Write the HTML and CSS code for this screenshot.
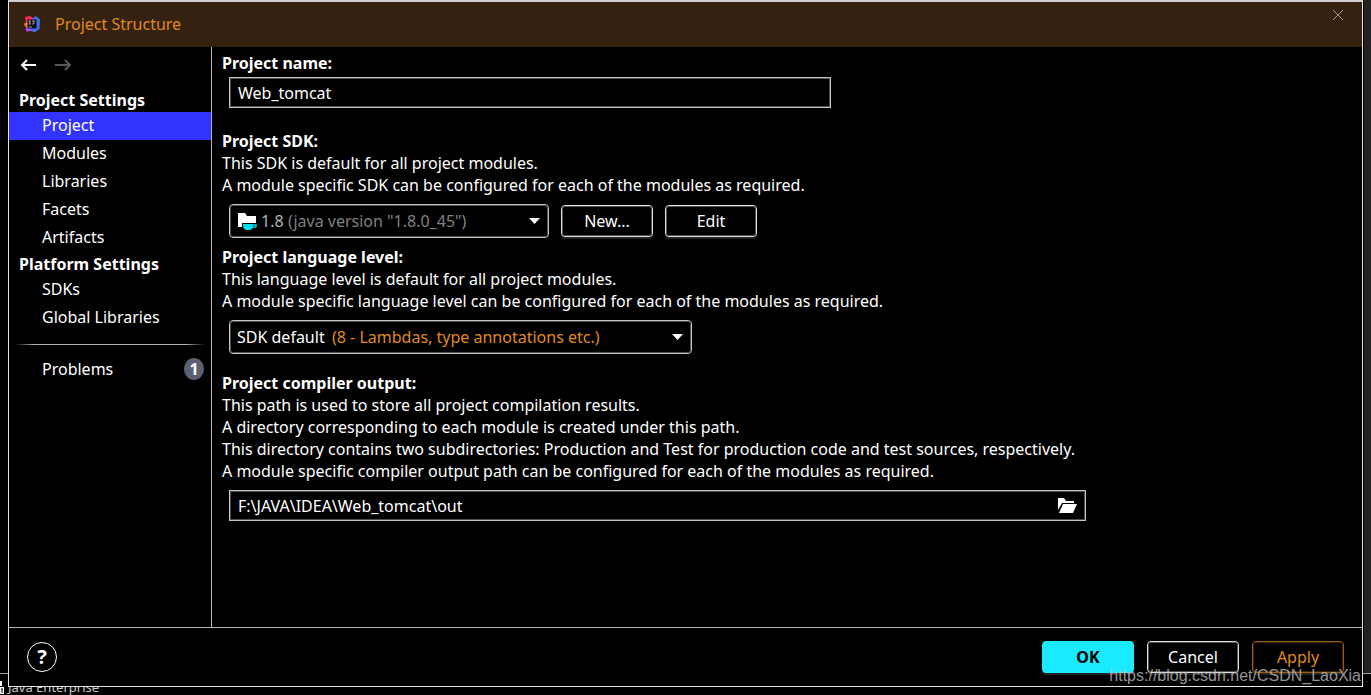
FILE: index.html
```
<!DOCTYPE html>
<html lang="en">
<head>
    <meta charset="UTF-8">
    <title>Project Structure</title>
    <link rel="stylesheet" href="styles.css">
</head>
<body>
    <div class="backdrop">
        <svg class="backdrop-icon" viewBox="0 0 4 13">
            <path d="M0 0H2V5H0ZM0 6H4V13H0Z" fill="#fff"/>
            <path d="M1 8H3M2 8V12" fill="none" stroke="#000"/>
        </svg>
        <span class="backdrop-text">Java Enterprise</span>
    </div>
    <div class="dialog">
        <header class="title-bar">
            <svg class="logo" viewBox="0 0 16 16">
                <path d="M1 1L6 0L10 2.500L8 9L2 9L0 8L2 6Z" fill="#fe2857"/>
                <path d="M0 8L4 6L6 11L2 11.500Z" fill="#fc801d"/>
                <path d="M2 10.500L8 8L11 16L7 15L2 15.500Z" fill="#b74af7"/>
                <path d="M9 2L12 0L16 3.500L15.500 13L11 16L6 14L9 8Z" fill="#3f6fee"/>
                <path d="M3.500 3.500H12.500V12.500H3.500Z" fill="#0a0a0a"/>
                <path d="M4.500 5H7M5.800 5V8M4.500 8H7M8 5H10.500M10 5V7.500L9 8H8M4.500 11H8" fill="none" stroke="#ccc" stroke-width="0.800"/>
            </svg>
            <h1>Project Structure</h1>
            <button class="close" aria-label="Close">
                <svg viewBox="0 0 10 10"><path d="M0 0L10 10M10 0L0 10" fill="none" stroke="#a09a94"/></svg>
            </button>
        </header>
        <div class="content">
            <nav class="sidebar">
                <div class="history">
                    <button aria-label="Back">
                        <svg viewBox="0 0 18 14"><path d="M17 7H3M8 2L3 7L8 12" fill="none" stroke="#fff" stroke-width="2"/></svg>
                    </button>
                    <button aria-label="Forward">
                        <svg viewBox="0 0 18 14"><path d="M1 7H16M11 2L16 7L11 12" fill="none" stroke="#5a5a5a" stroke-width="2"/></svg>
                    </button>
                </div>
                <h2>Project Settings</h2>
                <ul>
                    <li><a href="#" class="active">Project</a></li>
                    <li><a href="#">Modules</a></li>
                    <li><a href="#">Libraries</a></li>
                    <li><a href="#">Facets</a></li>
                    <li><a href="#">Artifacts</a></li>
                </ul>
                <h2>Platform Settings</h2>
                <ul>
                    <li><a href="#">SDKs</a></li>
                    <li><a href="#">Global Libraries</a></li>
                </ul>
                <div class="separator"></div>
                <ul>
                    <li><a href="#">Problems <span class="count">1</span></a></li>
                </ul>
            </nav>
            <main class="settings">
                <section>
                    <label class="heading" for="name">Project name:</label>
                    <input class="field name-field" id="name" type="text" value="Web_tomcat">
                </section>
                <section>
                    <label class="heading" for="sdk">Project SDK:</label>
                    <p>This SDK is default for all project modules.</p>
                    <p>A module specific SDK can be configured for each of the modules as required.</p>
                    <div class="controls">
                        <div class="combo sdk-combo">
                            <select id="sdk">
                                <option>1.8</option>
                            </select>
                            <svg class="sdk-icon" viewBox="0 0 20 18">
                                <path d="M0 1H7L9 4H18V11H4V15H0Z" fill="#fff"/>
                                <path d="M5 12H15V13Q15 18 11 18H9Q5 18 5 13Z" fill="#00e0f5"/>
                                <path d="M14.500 13H18V14.500Q17.500 15.500 14.500 15.500" fill="none" stroke="#00e0f5" stroke-width="1.500"/>
                            </svg>
                            <span class="hint">(java version "1.8.0_45")</span>
                            <svg class="arrow" viewBox="0 0 11 6"><path d="M0 0H11L5.500 6Z" fill="#fff"/></svg>
                        </div>
                        <button class="btn">New...</button>
                        <button class="btn">Edit</button>
                    </div>
                </section>
                <section>
                    <label class="heading" for="level">Project language level:</label>
                    <p>This language level is default for all project modules.</p>
                    <p>A module specific language level can be configured for each of the modules as required.</p>
                    <div class="controls level-controls">
                        <div class="combo level-combo">
                            <select id="level">
                                <option>SDK default</option>
                            </select>
                            <span class="hint">(8 - Lambdas, type annotations etc.)</span>
                            <svg class="arrow" viewBox="0 0 11 6"><path d="M0 0H11L5.500 6Z" fill="#fff"/></svg>
                        </div>
                    </div>
                </section>
                <section>
                    <label class="heading" for="output">Project compiler output:</label>
                    <p>This path is used to store all project compilation results.</p>
                    <p>A directory corresponding to each module is created under this path.</p>
                    <p>This directory contains two subdirectories: Production and Test for production code and test sources, respectively.</p>
                    <p>A module specific compiler output path can be configured for each of the modules as required.</p>
                    <div class="field path-field">
                        <input id="output" type="text" value="F:\JAVA\IDEA\Web_tomcat\out">
                        <button aria-label="Browse">
                            <svg viewBox="0 0 19 15"><path d="M0 0H6L8 3H16V5H4L0 12ZM5 6H19L15 15H1Z" fill="#fff"/></svg>
                        </button>
                    </div>
                </section>
            </main>
        </div>
        <footer class="buttons">
            <button class="help" aria-label="Help">?</button>
            <button class="btn ok">OK</button>
            <button class="btn">Cancel</button>
            <button class="btn apply">Apply</button>
        </footer>
        <span class="watermark">https://blog.csdn.net/CSDN_LaoXia</span>
    </div>
</body>
</html>
```
FILE: styles.css
```
*{
    margin: 0;
    padding: 0;
    box-sizing: border-box;
}
body{
    min-height: 100vh;
    padding: 0 8px 8px;
    display: flex;
    position: relative;
    overflow: hidden;
    background: linear-gradient(to left, #222222 7px, #000000 7px);
    color: #ffffff;
    font: 16px/22px "Noto Sans", sans-serif;
}
button, input, select{
    font: inherit;
    color: inherit;
    background: none;
    border: none;
}
ul{
    list-style-type: none;
}
a{
    color: inherit;
    text-decoration: none;
}
h1, h2{
    font-size: 16px;
}
svg{
    display: block;
}

/* window behind the dialog */
.backdrop{
    position: absolute;
    left: 0;
    right: 0;
    bottom: 0;
    height: 22px;
    border-top: 1px solid #a0a0a0;
    background: #000000;
}
.backdrop-icon{
    position: absolute;
    left: 0;
    bottom: 1px;
    width: 4px;
    height: 13px;
}
.backdrop-text{
    position: absolute;
    left: 8px;
    bottom: -1px;
    color: #c8c8c8;
    font-size: 13px;
    line-height: 18px;
}

.dialog{
    flex: 1;
    display: flex;
    flex-direction: column;
    position: relative;
    border: 1px solid #e6e6e6;
    border-top: 2px solid #d0d0d0;
    background: #000000;
}
.title-bar{
    height: 45px;
    padding: 0 0 2px 15px;
    display: flex;
    align-items: center;
    background: #35210f;
    color: #e08a1e;
}
.title-bar h1{
    flex: 1;
    margin-left: 15px;
    font-weight: normal;
}
.logo{
    width: 16px;
    height: 16px;
}
.close{
    align-self: flex-start;
    padding: 8px 19px;
}
.close svg{
    width: 10px;
    height: 10px;
}

.content{
    flex: 1;
    display: flex;
}
.sidebar{
    width: 203px;
    border-right: 1px solid #b4b4b4;
}
.history{
    height: 41px;
    padding: 0 10px 5px;
    display: flex;
    align-items: center;
    gap: 17px;
}
.history svg{
    width: 18px;
    height: 14px;
}
.sidebar h2{
    padding-left: 10px;
    line-height: 24px;
}
.sidebar a{
    height: 28px;
    padding: 0 7px 2px 33px;
    display: flex;
    justify-content: space-between;
    align-items: center;
}
.sidebar .active{
    background: #3333ff;
}
.separator{
    height: 1px;
    margin: 12px 6px 11px;
    background: linear-gradient(to right, transparent, #b4b4b4 10%, #b4b4b4 90%, transparent);
}
.count{
    width: 20px;
    height: 22px;
    border-radius: 50%;
    background: #5c6070;
    font-weight: bold;
    text-align: center;
}

.settings{
    flex: 1;
    padding: 5px 10px;
}
.heading{
    display: block;
    font-weight: bold;
}
.field{
    height: 31px;
    margin: 3px 7px 22px;
    border: 1px solid #c4c4c4;
    outline: 1px solid #505050;
    outline-offset: -2px;
}
.name-field{
    width: 602px;
    padding: 0 8px;
    display: block;
}
.path-field{
    width: 857px;
    margin-top: 8px;
    padding: 0 8px;
    display: flex;
    align-items: center;
}
.path-field input{
    flex: 1;
}
.path-field svg{
    width: 19px;
    height: 15px;
}
.controls{
    margin: 8px 7px;
    display: flex;
    align-items: center;
    gap: 12px;
}
.level-controls{
    margin-bottom: 18px;
}
.combo{
    height: 34px;
    display: flex;
    align-items: center;
    position: relative;
}
.combo select{
    width: 100%;
    height: 34px;
    padding-left: 7px;
    border: 1px solid #c4c4c4;
    border-radius: 4px;
    outline: 1px solid #505050;
    outline-offset: -2px;
    appearance: none;
}
.sdk-combo{
    width: 320px;
    color: #b4b4b4;
}
.sdk-combo select{
    padding-left: 31px;
}
.level-combo{
    width: 463px;
}
.hint{
    position: absolute;
    left: 59px;
    color: #808080;
    pointer-events: none;
}
.level-combo .hint{
    left: 103px;
    color: #e08a1e;
}
.sdk-icon{
    position: absolute;
    left: 9px;
    width: 20px;
    height: 18px;
    pointer-events: none;
}
.arrow{
    position: absolute;
    right: 9px;
    width: 11px;
    height: 6px;
    pointer-events: none;
}
.btn{
    width: 92px;
    height: 32px;
    border: 1px solid #e0e0e0;
    border-radius: 4px;
    outline: 1px solid #505050;
    outline-offset: -2px;
    box-shadow: 0 2px 1px #262626;
}

.buttons{
    height: 59px;
    padding: 0 18px;
    display: flex;
    align-items: center;
    gap: 13px;
    border-top: 1px solid #b4b4b4;
}
.help{
    width: 30px;
    height: 30px;
    margin-right: auto;
    border: 1px solid #ffffff;
    border-radius: 50%;
    font-size: 20px;
    font-weight: bold;
}
.ok{
    border-color: #1aeaff;
    outline: none;
    background: #1aeaff;
    color: #000000;
    font-weight: bold;
}
.apply{
    border-color: #9a5c14;
    outline-color: #3a2208;
    color: #e08a1e;
}
.watermark{
    position: absolute;
    right: 1px;
    bottom: 0;
    color: rgba(190, 190, 190, 0.8);
    font: 16px/20px "Liberation Sans", sans-serif;
}
```
